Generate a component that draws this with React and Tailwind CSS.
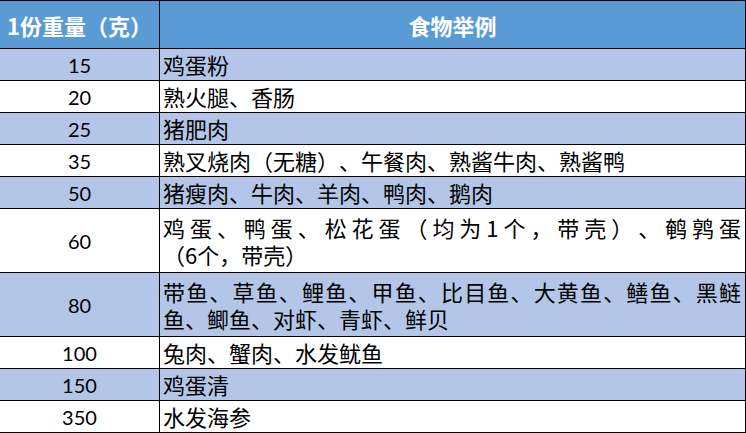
import React from "react";

const rows = [
  { w: "15", lines: ["鸡蛋粉"], blue: true },
  { w: "20", lines: ["熟火腿、香肠"], blue: false },
  { w: "25", lines: ["猪肥肉"], blue: true },
  { w: "35", lines: ["熟叉烧肉（无糖）、午餐肉、熟酱牛肉、熟酱鸭"], blue: false },
  { w: "50", lines: ["猪瘦肉、牛肉、羊肉、鸭肉、鹅肉"], blue: true },
  { w: "60", lines: ["鸡蛋、鸭蛋、松花蛋（均为1个，带壳）、鹌鹑蛋", "（6个，带壳）"], blue: false },
  { w: "80", lines: ["带鱼、草鱼、鲤鱼、甲鱼、比目鱼、大黄鱼、鳝鱼、黑鲢", "鱼、鲫鱼、对虾、青虾、鲜贝"], blue: true },
  { w: "100", lines: ["兔肉、蟹肉、水发鱿鱼"], blue: false },
  { w: "150", lines: ["鸡蛋清"], blue: true },
  { w: "350", lines: ["水发海参"], blue: false },
];

const cjk = { fontFamily: '"Noto Sans CJK SC", sans-serif' };
const num = { fontFamily: 'Lato, "Noto Sans CJK SC", sans-serif' };

export default function App() {
  return (
    <div className="w-[746px] h-[433px] bg-white border-t border-black text-black [text-spacing-trim:space-all]">
      <div className="flex h-[48px] border-b border-black bg-[#5b9bd5] text-white font-bold text-[22px]" style={cjk}>
        <div className="w-[159px] flex items-center justify-center leading-none">1份重量（克）</div>
        <div className="flex-1 border-l border-r border-black flex items-center justify-center leading-none">食物举例</div>
      </div>
      {rows.map((r) => (
        <div
          key={r.w}
          className={
            (r.lines.length > 1 ? "h-[64px] " : "h-[32px] ") +
            "flex border-b border-black " +
            (r.blue ? "bg-[#b4c6e7]" : "bg-white")
          }
        >
          <div className="w-[159px] flex items-center justify-center text-[20px] leading-none" style={num}>
            {r.w}
          </div>
          <div className="flex-1 border-l border-r border-black flex flex-col justify-center pl-[3px] pr-[4px] text-[22px] leading-[27px]" style={cjk}>
            {r.lines.length > 1 ? (
              <>
                <div className="h-[27px] text-justify [text-align-last:justify] whitespace-nowrap">{r.lines[0]}</div>
                <div className="h-[27px] whitespace-nowrap">{r.lines[1]}</div>
              </>
            ) : (
              <div className="whitespace-nowrap">{r.lines[0]}</div>
            )}
          </div>
        </div>
      ))}
    </div>
  );
}
